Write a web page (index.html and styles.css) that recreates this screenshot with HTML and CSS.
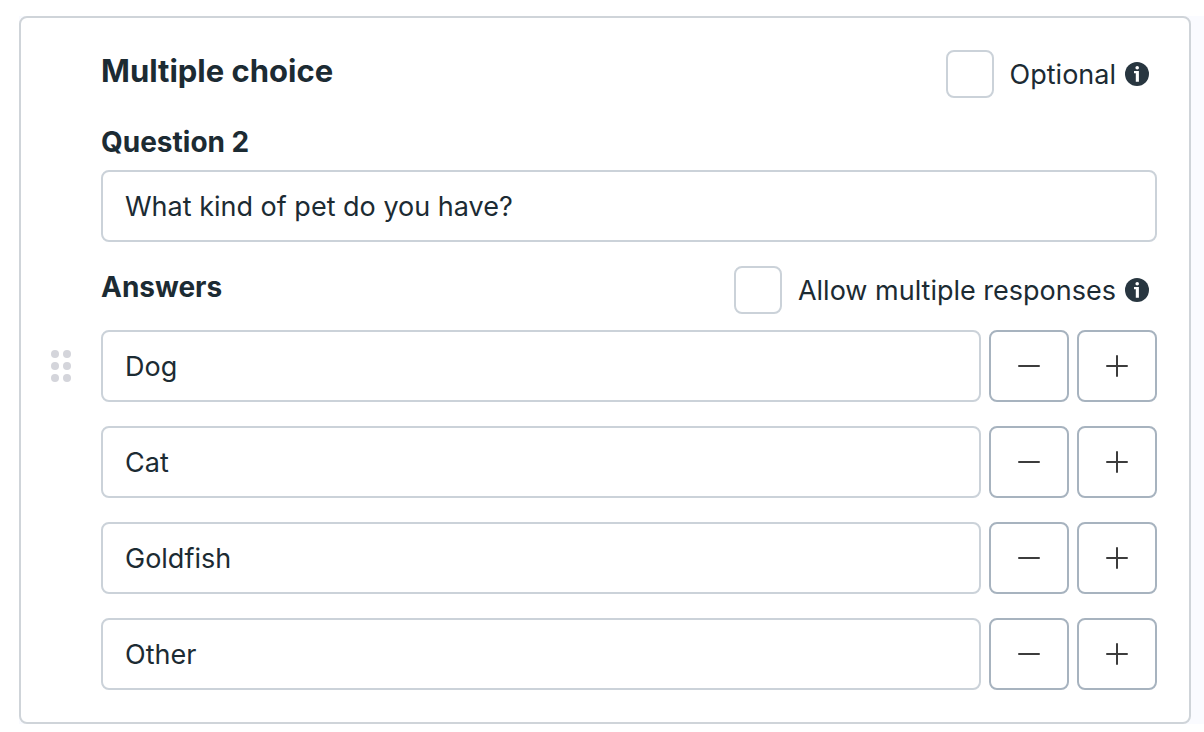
FILE: index.html
```html
<!DOCTYPE html>
<html lang="en">
<head>
    <meta charset="UTF-8">
    <meta name="viewport" content="width=device-width, initial-scale=1.0">
    <title>Multiple choice</title>
    <link rel="stylesheet" href="styles.css">
</head>
<body>
    <!-- Shared icons -->
    <svg class="sprite" aria-hidden="true">
        <symbol id="info" viewBox="0 0 24 24">
            <circle cx="12" cy="12" r="12" fill="#283640"/>
            <circle cx="12.2" cy="5.7" r="1.8" fill="#fff"/>
            <path d="M9 9H13.9V19.8H10.8V11.2H9Z" fill="#fff"/>
        </symbol>
        <symbol id="minus" viewBox="0 0 24 24">
            <path d="M2 12H22" stroke="#3c3c3c" stroke-width="2" stroke-linecap="round"/>
        </symbol>
        <symbol id="plus" viewBox="0 0 24 24">
            <path d="M2 12H22M12 2V22" stroke="#3c3c3c" stroke-width="2" stroke-linecap="round"/>
        </symbol>
    </svg>

    <main class="page">
        <form class="card">
            <div class="row">
                <h2 class="title">Multiple choice</h2>
                <div class="option">
                    <input type="checkbox" class="checkbox" id="optional">
                    <label for="optional">Optional</label>
                    <svg class="info"><use href="#info"/></svg>
                </div>
            </div>

            <div class="question">
                <label class="label" for="question">Question 2</label>
                <input type="text" class="field" id="question" value="What kind of pet do you have?">
            </div>

            <div class="row">
                <h3 class="label" id="answers">Answers</h3>
                <div class="option">
                    <input type="checkbox" class="checkbox" id="multiple">
                    <label for="multiple">Allow multiple responses</label>
                    <svg class="info"><use href="#info"/></svg>
                </div>
            </div>

            <button type="button" class="handle" aria-label="Move question">
                <svg viewBox="0 0 20 32" width="20" height="32" fill="#d4d5db">
                    <circle cx="4" cy="4" r="4"/>
                    <circle cx="16" cy="4" r="4"/>
                    <circle cx="4" cy="16" r="4"/>
                    <circle cx="16" cy="16" r="4"/>
                    <circle cx="4" cy="28" r="4"/>
                    <circle cx="16" cy="28" r="4"/>
                </svg>
            </button>
            <div class="answers" role="group" aria-labelledby="answers">
                <div class="answer">
                    <input type="text" class="field" aria-label="Answer 1" value="Dog">
                    <button type="button" class="btn" aria-label="Remove answer 1"><svg class="icon"><use href="#minus"/></svg></button>
                    <button type="button" class="btn" aria-label="Add after answer 1"><svg class="icon"><use href="#plus"/></svg></button>
                </div>
                <div class="answer">
                    <input type="text" class="field" aria-label="Answer 2" value="Cat">
                    <button type="button" class="btn" aria-label="Remove answer 2"><svg class="icon"><use href="#minus"/></svg></button>
                    <button type="button" class="btn" aria-label="Add after answer 2"><svg class="icon"><use href="#plus"/></svg></button>
                </div>
                <div class="answer">
                    <input type="text" class="field" aria-label="Answer 3" value="Goldfish">
                    <button type="button" class="btn" aria-label="Remove answer 3"><svg class="icon"><use href="#minus"/></svg></button>
                    <button type="button" class="btn" aria-label="Add after answer 3"><svg class="icon"><use href="#plus"/></svg></button>
                </div>
                <div class="answer">
                    <input type="text" class="field" aria-label="Answer 4" value="Other">
                    <button type="button" class="btn" aria-label="Remove answer 4"><svg class="icon"><use href="#minus"/></svg></button>
                    <button type="button" class="btn" aria-label="Add after answer 4"><svg class="icon"><use href="#plus"/></svg></button>
                </div>
            </div>
        </form>
    </main>
</body>
</html>
```
FILE: styles.css
```css
* {
    box-sizing: border-box;
}
body {
    margin: 0;
    padding: 16px 0 8px 19px;
    background: #fff;
    color: #1c2b33;
    font-family: Inter, Roboto, sans-serif;
    font-size: 27px;
}
.sprite {
    display: none;
}
.page {
    padding-right: 13px;
    background: #fafbff;
}
.card {
    display: grid;
    grid-template-columns: 20px 1fr;
    column-gap: 30px;
    padding: 32px 32px 32px 30px;
    background: #fff;
    border: 2px solid #cfd4d9;
    border-radius: 8px;
}
.row {
    grid-column: 2;
    display: flex;
    justify-content: space-between;
    align-items: flex-start;
}
.title,
.label {
    display: block;
    margin: 0;
    font-size: 28px;
    font-weight: 700;
    line-height: 40px;
}
.title {
    font-size: 31px;
}
.row .title,
.row .label {
    line-height: 42px;
}
.option {
    display: flex;
    align-items: center;
    padding-right: 8px;
}
.checkbox {
    appearance: none;
    width: 48px;
    height: 48px;
    margin: 0 16px 0 0;
    background: #fff;
    border: 2px solid #cbd2d9;
    border-radius: 8px;
}
.checkbox:checked {
    background: #283640;
}
.info {
    width: 24px;
    height: 24px;
    margin-left: 9px;
}
.question {
    grid-column: 2;
    margin: 24px 0;
}
.question .field {
    margin-top: 8px;
}
.field {
    display: block;
    width: 100%;
    min-width: 0;
    height: 72px;
    padding: 0 22px;
    background: #fff;
    border: 2px solid #cbd2d9;
    border-radius: 8px;
    color: inherit;
    font: inherit;
}
.handle {
    align-self: start;
    display: flex;
    align-items: center;
    height: 72px;
    margin-top: 16px;
    padding: 0;
    background: none;
    border: none;
    cursor: grab;
}
.answers {
    display: grid;
    gap: 24px;
    margin-top: 16px;
}
.answer {
    display: flex;
    gap: 8px;
}
.answer .field {
    flex: 1;
}
.btn {
    display: flex;
    align-items: center;
    justify-content: center;
    width: 80px;
    height: 72px;
    padding: 0;
    background: #fff;
    border: 2px solid #a7b3bf;
    border-radius: 8px;
    cursor: pointer;
}
.icon {
    width: 24px;
    height: 24px;
}
```
